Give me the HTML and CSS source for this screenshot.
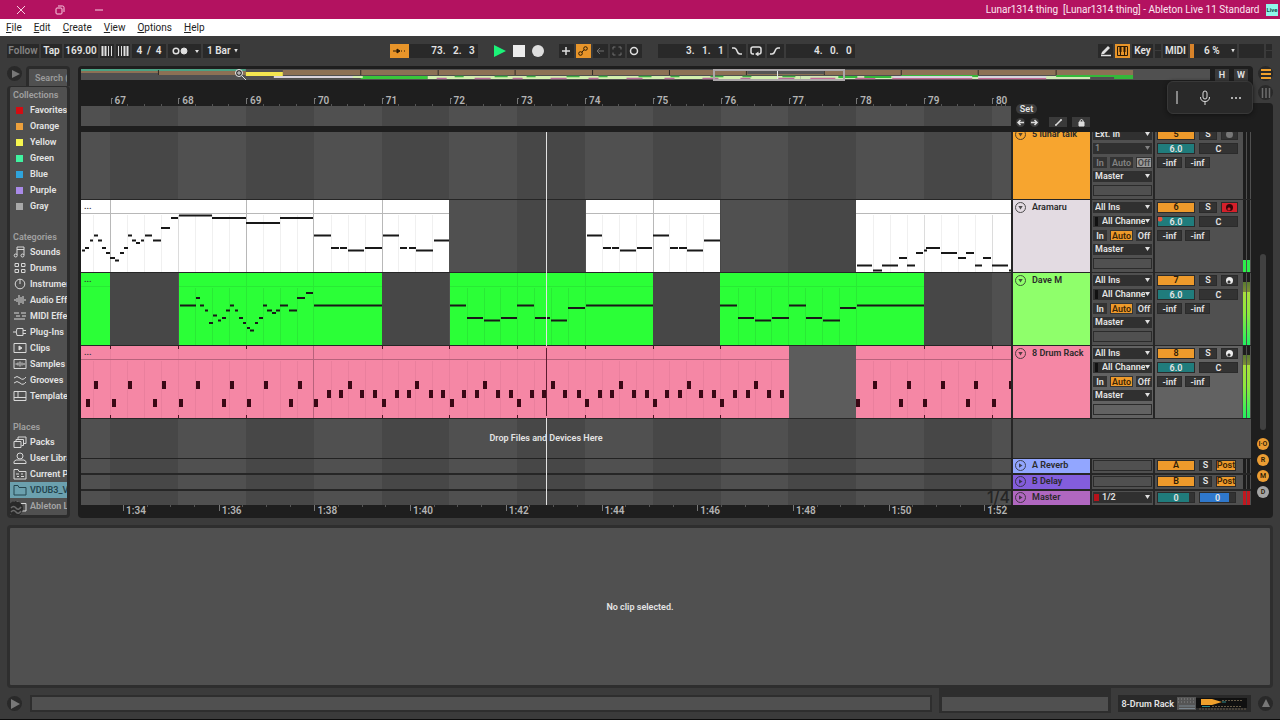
FILE: index.html
```html
<!DOCTYPE html>
<html lang="en">
<head>
    <meta charset="UTF-8">
    <meta name="viewport" content="width=device-width, initial-scale=1.0">
    <title>Lunar1314 thing - Ableton Live 11 Standard</title>
    <link rel="stylesheet" href="styles.css">
</head>
<body>

<header class="titlebar">
    <div class="window-buttons">
        <button aria-label="Close"><svg width="10" height="10" viewBox="0 0 10 10"><path d="M1 1l8 8M9 1l-8 8"/></svg></button>
        <button aria-label="Restore"><svg width="10" height="10" viewBox="0 0 10 10"><rect x="1" y="3" width="6" height="6" rx="1"/><path d="M3 1h4.500a1.500 1.500 0 0 1 1.500 1.500V7"/></svg></button>
        <button aria-label="Minimize"><svg width="10" height="10" viewBox="0 0 10 10"><path d="M1 5h8"/></svg></button>
    </div>
    <div class="window-title">Lunar1314 thing&nbsp; [Lunar1314 thing] - Ableton Live 11 Standard <span class="live-logo">Live</span></div>
</header>

<nav class="menubar">
    <a href="#"><u>F</u>ile</a>
    <a href="#"><u>E</u>dit</a>
    <a href="#"><u>C</u>reate</a>
    <a href="#"><u>V</u>iew</a>
    <a href="#"><u>O</u>ptions</a>
    <a href="#"><u>H</u>elp</a>
</nav>

<div class="toolbar">
    <div class="tool-group">
        <button class="tool follow">Follow</button>
        <button class="tool tap">Tap</button>
        <input class="tool tempo" type="text" value="169.00" aria-label="Tempo">
        <button class="tool nudge" aria-label="Nudge down"><svg width="12" height="10" viewBox="0 0 12 10"><path d="M1.500 0v10M4.500 0v10" stroke-width="2"/><path d="M7.500 0v10M10.500 0v10"/></svg></button>
        <button class="tool nudge" aria-label="Nudge up"><svg width="12" height="10" viewBox="0 0 12 10"><path d="M1.500 0v10M4.500 0v10"/><path d="M7.500 0v10M10.500 0v10" stroke-width="2"/></svg></button>
        <input class="tool signature" type="text" value="4  /  4" aria-label="Time signature">
        <button class="tool metronome" aria-label="Metronome"><svg width="28" height="8" viewBox="0 0 28 8"><circle cx="5" cy="4" r="2.800" stroke-width="1.500"/><circle cx="13" cy="4" r="3" class="fill"/><path class="fill flat" d="M24 3h4l-2 3z"/></svg></button>
        <span class="tool quantize"><select aria-label="Quantization"><option>1 Bar</option></select></span>
    </div>
    <div class="space-left"></div>
    <div class="tool-group">
        <button class="tool on arrow-follow" aria-label="Follow playback"><svg width="14" height="8" viewBox="0 0 14 8"><path d="M1 4h4M9 4h1M12 4h1"/><path class="fill" d="M5 2l3 2-3 2z"/></svg></button>
        <input class="tool position" type="text" value="73.   2.   3" aria-label="Position">
        <div class="transport">
            <button aria-label="Play"><svg width="12" height="14" viewBox="0 0 12 14"><path fill="#1bf278" d="M0 1l12 6-12 6z"/></svg></button>
            <button aria-label="Stop"><svg width="12" height="14" viewBox="0 0 12 14"><path fill="#ececec" d="M0 1h12v12H0z"/></svg></button>
            <button aria-label="Record"><svg width="12" height="14" viewBox="0 0 12 14"><circle fill="#dedede" cx="6" cy="7" r="6"/></svg></button>
        </div>
        <button class="tool square" aria-label="Overdub"><svg width="10" height="10" viewBox="0 0 10 10"><path d="M5 1v8M1 5h8" stroke-width="1.500"/></svg></button>
        <button class="tool square on" aria-label="Automation arm"><svg width="10" height="10" viewBox="0 0 10 10"><circle cx="2.500" cy="7.500" r="1.800"/><circle cx="7.500" cy="2.500" r="1.800"/><path d="M4 6.500q.5-2 2-2.500"/></svg></button>
        <button class="tool square dim" aria-label="Re-enable automation"><svg width="10" height="10" viewBox="0 0 10 10"><path d="M9 5H2M5 2L2 5l3 3"/></svg></button>
        <button class="tool square dim" aria-label="Capture MIDI"><svg width="10" height="10" viewBox="0 0 10 10"><path d="M1 3.500V1h2.500M6.500 1H9v2.500M9 6.500V9H6.500M3.500 9H1V6.500"/></svg></button>
        <button class="tool square" aria-label="Session record"><svg width="10" height="10" viewBox="0 0 10 10"><circle cx="5" cy="5" r="3.500" stroke-width="1.500"/></svg></button>
        <input class="tool position loop-start" type="text" value="3.   1.   1" aria-label="Loop start">
        <button class="tool punch" aria-label="Punch in"><svg width="12" height="10" viewBox="0 0 12 10"><path d="M1 2h2q2 0 3 3t3 3h2" stroke-width="1.500"/></svg></button>
        <button class="tool punch" aria-label="Loop"><svg width="12" height="10" viewBox="0 0 12 10"><path d="M4 8H3Q1 8 1 6V3q0-2 2-2h6q2 0 2 2v3q0 2-2 2H7" stroke-width="1.500"/><path class="fill flat" d="M8.500 5.500v5L5 8z"/></svg></button>
        <button class="tool punch" aria-label="Punch out"><svg width="12" height="10" viewBox="0 0 12 10"><path d="M1 8h2q2 0 3-3t3-3h2" stroke-width="1.500"/></svg></button>
        <input class="tool position" type="text" value="4.   0.   0" aria-label="Loop length">
    </div>
    <div class="space-right"></div>
    <div class="tool-group">
        <button class="tool square" aria-label="Draw mode"><svg width="12" height="12" viewBox="0 0 12 12"><path class="fill flat" d="M2 7l6-6 2 2-6 6-3 .5z"/><path d="M1 10.500h10" stroke-width="1.500"/></svg></button>
        <button class="tool square on" aria-label="Computer MIDI keyboard"><svg width="11" height="10" viewBox="0 0 11 10"><path d="M.5.500h10v9H.5zM3.500 5v5M7.500 5v5"/><path d="M3.500 0v6M7.500 0v6" stroke-width="2"/></svg></button>
        <button class="tool key">Key</button>
        <span class="tool lamp"></span>
        <button class="tool midi">MIDI</button>
        <span class="cpu-bar"></span>
        <span class="tool cpu"><select aria-label="CPU load"><option>6 %</option></select></span>
        <span class="tool disk"></span>
        <span class="tool lamp"></span>
    </div>
</div>

<main class="workspace">
    <aside class="browser">
        <div class="browser-top">
            <button class="round" aria-label="Hide browser"><svg width="14" height="14" viewBox="0 0 14 14"><path fill="#777" d="M4 3l8 4-8 4z"/></svg></button>
            <input class="search" type="text" placeholder="Search (Ctrl + F)" aria-label="Search">
        </div>
        <div class="browser-list">
            <h2>Collections</h2>
            <ul>
                <li><a href="#"><i class="swatch red"></i>Favorites</a></li>
                <li><a href="#"><i class="swatch orange"></i>Orange</a></li>
                <li><a href="#"><i class="swatch yellow"></i>Yellow</a></li>
                <li><a href="#"><i class="swatch green"></i>Green</a></li>
                <li><a href="#"><i class="swatch blue"></i>Blue</a></li>
                <li><a href="#"><i class="swatch purple"></i>Purple</a></li>
                <li><a href="#"><i class="swatch gray"></i>Gray</a></li>
            </ul>
            <h2>Categories</h2>
            <ul>
                <li><a href="#"><svg viewBox="0 0 14 12"><path d="M4 9V1h7v8M4 3.500h7"/><circle cx="2.700" cy="9.500" r="1.500"/><circle cx="9.500" cy="9.500" r="1.500"/></svg>Sounds</a></li>
                <li><a href="#"><svg viewBox="0 0 14 12"><path d="M2 1.500h3.500V4.500H2zM8.500 1.500H12V4.500H8.500zM2 7.500h3.500v3H2zM8.500 7.500H12v3H8.500z"/></svg>Drums</a></li>
                <li><a href="#"><svg viewBox="0 0 14 12"><circle cx="7" cy="6" r="4.800"/><path d="M7 1v5"/></svg>Instruments</a></li>
                <li><a href="#"><svg viewBox="0 0 14 12"><path d="M1 6h2M4 4v4M6 1v10M8 3v6M10 2v8M11 6h2"/></svg>Audio Effects</a></li>
                <li><a href="#"><svg viewBox="0 0 14 12"><path d="M1 3h5M8 3h5M3 6h4M9 6h4M1 9h11"/></svg>MIDI Effects</a></li>
                <li><a href="#"><svg viewBox="0 0 14 12"><path d="M0 6h3M4 2.500h6v7H4q-1.500-3.500 0-7zM10 4.500h3M10 7.500h3"/></svg>Plug-Ins</a></li>
                <li><a href="#"><svg viewBox="0 0 14 12"><path d="M1 1.500h12v9H1z"/><path fill="#ddd" d="M6 4l3 2-3 2z"/></svg>Clips</a></li>
                <li><a href="#"><svg viewBox="0 0 14 12"><path d="M1 1.500h12v9H1zM2.500 6h2M5 4.500v3M7 3.500v5M9 4.500v3M10 6h2"/></svg>Samples</a></li>
                <li><a href="#"><svg viewBox="0 0 14 12"><path d="M1 4q3-3 6 0t6-1M1 9q3-3 6 0t6-1"/></svg>Grooves</a></li>
                <li><a href="#"><svg viewBox="0 0 14 12"><path d="M1 1.500h12v9H1zM5 1.500v6M1 7.500h12"/></svg>Templates</a></li>
            </ul>
            <h2>Places</h2>
            <ul>
                <li><a href="#"><svg viewBox="0 0 14 12"><path d="M1 5.500h7v6H1zM3 5V3.500h7.500v6H8.500M5 3V1h8v6.500h-2"/></svg>Packs</a></li>
                <li><a href="#"><svg viewBox="0 0 14 12"><circle cx="7" cy="4" r="3"/><path d="M1 11.500v-2l2-1.500h8l2 1.500v2z"/></svg>User Library</a></li>
                <li><a href="#"><svg viewBox="0 0 14 12"><path d="M1 11V1.500h4l1 2h7V11zM3 6h3M8 6h2M4 8.500h2M8 8.500h3"/></svg>Current Project</a></li>
                <li class="selected"><a href="#"><svg viewBox="0 0 14 12"><path d="M1 11V1.500h4l1 2h7V11z"/></svg>VDUB3_VSTs</a></li>
                <li class="faded"><a href="#"><svg viewBox="0 0 14 12"><path d="M1 11V1.500h4l1 2h7V11z"/></svg>Ableton Library</a></li>
            </ul>
            <button class="round groove" aria-label="Groove pool"><svg width="14" height="14" viewBox="0 0 14 14"><path fill="none" stroke="#6a6a6a" stroke-width="1.500" d="M2 6q2.500-3 5 0t5-1M2 10q2.500-3 5 0t5-1"/></svg></button>
        </div>
    </aside>

    <section class="arrangement">
        <div class="overview">
            <svg class="overview-map" viewBox="0 0 1130 11" preserveAspectRatio="none">
                <path fill="#505050" d="M0 0h1130v11H0z"/>
                <path fill="#8c7155" d="M0 2h77v2H0zM77 2h88v4H77zM202 1h851v5H202z"/>
                <path fill="#4ba283" d="M0 0h165v2H0z"/>
                <path fill="#f3e650" d="M165 3h37v4h-37z"/>
                <path fill="#d8d3dc" d="M193 7h87v2h-87z"/>
                <path fill="#38c83a" d="M280 7h67v3h-67z"/>
                <path fill="#d3efae" d="M272 7h10v2h-10zM347 7h373v3H347z"/>
                <path fill="#cfe9b5" d="M720 7h290v3H720z"/>
                <path stroke="#b76d98" stroke-width="1.500" stroke-dasharray="10 28 16 22" d="M356 9.500h364"/>
                <path stroke="#3fae43" stroke-width="1.500" stroke-dasharray="9 31 13 19" d="M374 7.500h346"/>
                <path stroke="#c46a97" stroke-width="1.500" d="M730 9.500h25M775 9.500h20M812 9.500h80M898 9.500h68"/>
                <path stroke="#34b83a" stroke-width="2" d="M758 8h19M784 8h27M821 7h77M976 7h77M1034 9h19"/>
                <path stroke="#d5d5dd" stroke-width="2" d="M813 8h79M898 8h68"/>
                <path stroke="#302b27" d="M77.500 1v5M280 1v5M357.500 1v5M434.500 1v5M512 1v5M589 1v5M666 1v5M744 1v5M821 1v5M898 1v5M976 1v5"/>
                <path fill="#555" d="M667 2h77v3h-77z"/>
            </svg>
            <div class="overview-window"></div>
            <svg class="magnifier" width="14" height="14" viewBox="0 0 14 14"><circle cx="6" cy="6" r="3.500" fill="#333" stroke="#eee"/><path d="M9 9l4 4M4 6h4M6 4v4" stroke="#ddd"/></svg>
            <button class="hw">H</button>
            <button class="hw">W</button>
        </div>

        <div class="ruler-row">
            <div class="ruler-area">
                <div class="beat-ruler">
                    <span></span><span>67</span><span>68</span><span>69</span><span>70</span><span>71</span><span>72</span><span>73</span><span>74</span><span>75</span><span>76</span><span>77</span><span>78</span><span>79</span><span>80</span>
                </div>
                <div class="scrub striped"></div>
            </div>
            <div class="set-area">
                <button class="set">Set</button>
                <div class="set-buttons">
                    <button class="dot" aria-label="Previous locator"><svg width="9" height="9" viewBox="0 0 9 9"><path d="M8 4.500H2M4.500 2L2 4.500 4.500 7" stroke-width="1.500"/></svg></button>
                    <button class="dot" aria-label="Next locator"><svg width="9" height="9" viewBox="0 0 9 9"><path d="M1 4.500h6M4.500 2L7 4.500 4.500 7" stroke-width="1.500"/></svg></button>
                    <button class="small-tool" aria-label="Automation mode"><svg width="9" height="9" viewBox="0 0 9 9"><path d="M2 7l5-5M1 7h2M6 2h2" stroke-width="1.500"/></svg></button>
                    <button class="small-tool lock" aria-label="Lock envelopes"><svg width="9" height="9" viewBox="0 0 9 9"><path fill="#ddd" d="M2 4h5v4H2z"/><path d="M3 4V2.500q1.500-2 3 0V4"/></svg></button>
                </div>
            </div>
        </div>

        <div class="tracks">
            <div class="track clipped">
                <div class="lane striped"></div>
                <div class="track-head">
                    <div class="track-name orange"><button class="fold" aria-label="Fold track"></button>5 lunar talk</div>
                    <div class="io">
                        <span class="drop"><select aria-label="Input type"><option>Ext. In</option></select></span>
                        <span class="drop off"><select aria-label="Input channel"><option>1</option></select></span>
                        <div class="monitor off"><button>In</button><button>Auto</button><button class="lit">Off</button></div>
                        <span class="drop"><select aria-label="Output type"><option>Master</option></select></span>
                        <div class="empty-box"></div>
                    </div>
                    <div class="mixer">
                        <div class="mix-row"><button class="number">5</button><button class="solo">S</button><button class="arm" aria-label="Arm"><i></i></button></div>
                        <div class="mix-row"><input class="volume" type="text" value="6.0" aria-label="Volume"><input class="pan" type="text" value="C" aria-label="Pan"></div>
                        <div class="mix-row sends"><input type="text" value="-inf" aria-label="Send A"><input type="text" value="-inf" aria-label="Send B"></div>
                    </div>
                    <div class="meter"><i></i><i></i></div>
                </div>
            </div>

            <div class="track">
                <div class="lane striped">
                    <svg class="clips" viewBox="0 0 930 72" preserveAspectRatio="none">
                        <path fill="#fff" d="M0 0h368v72H0zM505 0h134v72H505zM775 0h155v72H775z"/>
                        <path class="grid light" d="M12.500 15v57M46.500 15v57M63.500 15v57M80.500 15v57M114.500 15v57M131.500 15v57M148.500 15v57M182.500 15v57M199.500 15v57M216.500 15v57M250.500 15v57M267.500 15v57M284.500 15v57M317.500 15v57M334.500 15v57M351.500 15v57M521.500 15v57M538.500 15v57M555.500 15v57M588.500 15v57M605.500 15v57M622.500 15v57M792.500 15v57M809.500 15v57M826.500 15v57M860.500 15v57M877.500 15v57M894.500 15v57"/>
                        <path class="grid strong" d="M0 13.500h368M505 13.500h134M775 13.500h155M29.500 0v72M165.500 0v72M232.500 0v72M301.500 0v72M572.500 0v72"/>
                        <path class="grid" d="M97.500 15v57M843.500 15v57M911.500 15v57"/>
                        <path class="notes" d="M1 50.500h3M4 48h4M9 40.500h3M13 35.500h4M17 40.500h4M21 48h4M25 53h4M29 58h5M34 60.500h4M39 53h4M43 48h4M47 35.500h4M51 40.500h4M55 43h4M60 40.500h3M64 35.500h7M72 40.500h8M80 28h9M90 18h7M98 15.500h33M131 18h34M165 23h34M199 18h33M233 35.500h17M250 48h8M259 48h7M267 50.500h16M284 48h17M302 35.500h16M319 48h7M328 48h7M335 50.500h17M353 40.500h15"/>
                        <path class="notes" d="M506 35.500h15M522 48h8M531 48h7M539 50.500h16M556 48h15M572 35.500h16M589 48h8M598 48h8M606 50.500h16M623 40.500h16M776 65.500h15M792 70.500h9M801 65.500h16M818 58h8M826 65.500h8M835 53h7M843 50.500h3M845 48h14M860 53h16M877 58h8M885 53h8M894 65.500h7M902 58h8M911 65.500h16M928 70.500h2"/>
                    </svg>
                    <span class="clip-label">...</span>
                </div>
                <div class="track-head">
                    <div class="track-name mauve"><button class="fold" aria-label="Fold track"></button>Aramaru</div>
                    <div class="io">
                        <span class="drop"><select aria-label="Input type"><option>All Ins</option></select></span>
                        <span class="drop channel"><select aria-label="Input channel"><option>All Channels</option></select></span>
                        <div class="monitor"><button>In</button><button class="lit">Auto</button><button>Off</button></div>
                        <span class="drop"><select aria-label="Output type"><option>Master</option></select></span>
                        <div class="empty-box"></div>
                    </div>
                    <div class="mixer">
                        <div class="mix-row"><button class="number">6</button><button class="solo">S</button><button class="arm armed" aria-label="Arm"><i></i></button></div>
                        <div class="mix-row"><input class="volume automated" type="text" value="6.0" aria-label="Volume"><input class="pan" type="text" value="C" aria-label="Pan"></div>
                        <div class="mix-row sends"><input type="text" value="-inf" aria-label="Send A"><input type="text" value="-inf" aria-label="Send B"></div>
                    </div>
                    <div class="meter low"><i></i><i></i></div>
                </div>
            </div>

            <div class="track">
                <div class="lane striped">
                    <svg class="clips" viewBox="0 0 930 72" preserveAspectRatio="none">
                        <path fill="#2bff37" d="M0 0h29v72H0zM98 0h203v72H98zM369 0h203v72H369zM639 0h204v72H639z"/>
                        <path class="grid on-green" d="M0 13.500h29M98 13.500h203M369 13.500h203M639 13.500h204M165.500 0v72M232.500 0v72M436.500 0v72M504.500 0v72M707.500 0v72M775.500 0v72M114.500 15v57M131.500 15v57M148.500 15v57M182.500 15v57M199.500 15v57M216.500 15v57M386.500 15v57M403.500 15v57M419.500 15v57M453.500 15v57M470.500 15v57M487.500 15v57M657.500 15v57M674.500 15v57M690.500 15v57M724.500 15v57M741.500 15v57M758.500 15v57"/>
                        <path class="notes" d="M99 32.500h16M115 25h4M119 32.500h4M124 37.500h3M128 50h4M132 42.500h4M137 47.500h3M141 45h4M145 37.500h4M149 32.500h4M154 37.500h3M158 45h4M162 50h3M166 55h3M169 57.500h4M174 50h3M178 45h4M182 32.500h4M186 37.500h5M191 40h4M195 37.500h4M199 32.500h8M208 37.500h8M216 25h8M225 20h7M233 32.500h68"/>
                        <path class="notes" d="M369 32.500h16M386 45h16M403 47.500h16M420 45h16M436 32.500h17M454 45h15M470 47.500h16M487 35h17M505 32.500h67M639 32.500h17M657 45h16M674 47.500h16M691 45h17M708 32.500h17M725 45h16M742 47.500h17M759 35h16M776 32.500h67"/>
                    </svg>
                    <span class="clip-label">...</span>
                </div>
                <div class="track-head">
                    <div class="track-name lime"><button class="fold" aria-label="Fold track"></button>Dave M</div>
                    <div class="io">
                        <span class="drop"><select aria-label="Input type"><option>All Ins</option></select></span>
                        <span class="drop channel"><select aria-label="Input channel"><option>All Channels</option></select></span>
                        <div class="monitor"><button>In</button><button class="lit">Auto</button><button>Off</button></div>
                        <span class="drop"><select aria-label="Output type"><option>Master</option></select></span>
                        <div class="empty-box"></div>
                    </div>
                    <div class="mixer">
                        <div class="mix-row"><button class="number">7</button><button class="solo">S</button><button class="arm midi-arm" aria-label="Arm"><i></i></button></div>
                        <div class="mix-row"><input class="volume" type="text" value="6.0" aria-label="Volume"><input class="pan" type="text" value="C" aria-label="Pan"></div>
                        <div class="mix-row sends"><input type="text" value="-inf" aria-label="Send A"><input type="text" value="-inf" aria-label="Send B"></div>
                    </div>
                    <div class="meter high"><i></i><i></i></div>
                </div>
            </div>

            <div class="track active">
                <div class="lane over-playhead">
                    <svg class="clips" viewBox="0 0 930 72" preserveAspectRatio="none">
                        <path fill="#5c5c5c" d="M0 0h930v72H0z"/>
                        <path fill="#f587a5" d="M0 0h708v72H0zM775 0h155v72H775z"/>
                        <path class="grid on-pink" d="M12.500 15v57M46.500 15v57M63.500 15v57M80.500 15v57M114.500 15v57M131.500 15v57M148.500 15v57M182.500 15v57M199.500 15v57M216.500 15v57M250.500 15v57M267.500 15v57M284.500 15v57M317.500 15v57M334.500 15v57M351.500 15v57M386.500 15v57M403.500 15v57M419.500 15v57M453.500 15v57M487.500 15v57M521.500 15v57M538.500 15v57M555.500 15v57M588.500 15v57M605.500 15v57M622.500 15v57M657.500 15v57M674.500 15v57M690.500 15v57M792.500 15v57M809.500 15v57M826.500 15v57M860.500 15v57M877.500 15v57M894.500 15v57"/>
                        <path class="grid on-pink" d="M29.500 0v72M97.500 0v72M165.500 0v72M301.500 0v72M368.500 0v72M436.500 0v72M504.500 0v72M572.500 0v72M639.500 0v72M843.500 0v72M911.500 0v72"/>
                        <path class="grid on-pink-strong" d="M0 13.500h708M775 13.500h155M232.500 0v72"/>
                        <path stroke="#501525" d="M29.500 0v3m0 66v3M97.500 0v3m0 66v3M165.500 0v3m0 66v3M301.500 0v3m0 66v3M368.500 0v3m0 66v3M436.500 0v3m0 66v3M504.500 0v3m0 66v3M572.500 0v3m0 66v3M639.500 0v3m0 66v3M843.500 0v3m0 66v3M911.500 0v3m0 66v3"/>
                        <path class="hits" d="M15 35v8M49 35v8M83 35v8M117 35v8M151 35v8M185 35v8M219 35v8M269 35v8M336 35v8M404 35v8M472 35v8M540 35v8M608 35v8M675 35v8M794 35v8M828 35v8M862 35v8M895 35v8M930 35v8"/>
                        <path class="hits" d="M248 44v8M260 44v8M281 44v8M294 44v8M316 44v8M328 44v8M350 44v8M362 44v8M383 44v8M396 44v8M417 44v8M430 44v8M451 44v8M463 44v8M484 44v8M498 44v8M519 44v8M531 44v8M553 44v8M566 44v8M586 44v8M599 44v8M620 44v8M633 44v8M654 44v8M667 44v8M688 44v8M701 44v8"/>
                        <path class="hits" d="M7 53v8M33 53v8M74 53v8M100 53v8M143 53v8M168 53v8M210 53v8M235 53v8M303 53v8M371 53v8M438 53v8M506 53v8M574 53v8M641 53v8M777 53v8M820 53v8M844 53v8M887 53v8M913 53v8"/>
                        <path stroke="#5c1c30" d="M465.500 2v68"/>
                    </svg>
                    <span class="clip-label">...</span>
                </div>
                <div class="track-head">
                    <div class="track-name pink"><button class="fold" aria-label="Fold track"></button>8 Drum Rack</div>
                    <div class="io">
                        <span class="drop"><select aria-label="Input type"><option>All Ins</option></select></span>
                        <span class="drop channel"><select aria-label="Input channel"><option>All Channels</option></select></span>
                        <div class="monitor"><button>In</button><button class="lit">Auto</button><button>Off</button></div>
                        <span class="drop"><select aria-label="Output type"><option>Master</option></select></span>
                        <div class="empty-box"></div>
                    </div>
                    <div class="mixer">
                        <div class="mix-row"><button class="number">8</button><button class="solo">S</button><button class="arm midi-arm" aria-label="Arm"><i></i></button></div>
                        <div class="mix-row"><input class="volume" type="text" value="6.0" aria-label="Volume"><input class="pan" type="text" value="C" aria-label="Pan"></div>
                        <div class="mix-row sends"><input type="text" value="-inf" aria-label="Send A"><input type="text" value="-inf" aria-label="Send B"></div>
                    </div>
                    <div class="meter high"><i></i><i></i></div>
                </div>
            </div>

            <div class="drop-area">
                <div class="lane striped">Drop Files and Devices Here</div>
                <div class="drop-head"></div>
            </div>

            <div class="track return">
                <div class="lane striped"></div>
                <div class="track-head">
                    <div class="track-name periwinkle"><button class="fold closed" aria-label="Unfold track"></button>A Reverb</div>
                    <div class="io"><div class="empty-box"></div></div>
                    <div class="mixer"><div class="mix-row"><button class="number">A</button><button class="solo narrow">S</button><button class="post">Post</button></div></div>
                    <div class="meter"><i></i><i></i></div>
                </div>
            </div>
            <div class="track return">
                <div class="lane striped"></div>
                <div class="track-head">
                    <div class="track-name violet"><button class="fold closed" aria-label="Unfold track"></button>B Delay</div>
                    <div class="io"><div class="empty-box"></div></div>
                    <div class="mixer"><div class="mix-row"><button class="number">B</button><button class="solo narrow">S</button><button class="post">Post</button></div></div>
                    <div class="meter"><i></i><i></i></div>
                </div>
            </div>
            <div class="track return master">
                <div class="lane striped"></div>
                <div class="track-head">
                    <div class="track-name orchid"><button class="fold closed" aria-label="Unfold track"></button>Master</div>
                    <div class="io"><span class="drop channel cue"><select aria-label="Master output"><option>1/2</option></select></span></div>
                    <div class="mixer"><div class="mix-row"><input class="volume" type="text" value="0" aria-label="Master volume"><input class="pan cue-volume" type="text" value="0" aria-label="Cue volume"></div></div>
                    <div class="meter clip"><i></i><i></i></div>
                </div>
            </div>
            <div class="playhead"></div>
            <div class="grid-size">1/4</div>
        </div>

        <div class="time-ruler">
            <span></span><span>1:34</span><span>1:36</span><span>1:38</span><span>1:40</span><span>1:42</span><span>1:44</span><span>1:46</span><span>1:48</span><span>1:50</span><span>1:52</span>
        </div>

        <div class="dictation">
            <span class="grip"></span>
            <button aria-label="Microphone"><svg width="12" height="16" viewBox="0 0 12 16"><rect x="4" y="1" width="4" height="8" rx="2"/><path d="M1.500 7q0 4.500 4.500 4.500T10.500 7M6 11.500V15"/></svg></button>
            <button aria-label="More"><svg width="12" height="16" viewBox="0 0 12 16"><g fill="#ddd" stroke="none"><circle cx="2" cy="8" r="1"/><circle cx="6" cy="8" r="1"/><circle cx="10" cy="8" r="1"/></g></svg></button>
        </div>
    </section>

    <div class="rail">
        <div class="view-switch">
            <button class="round" aria-label="Arrangement view"><svg width="14" height="14" viewBox="0 0 14 14"><path stroke="#f0a02c" stroke-width="2" d="M2 3h10M2 7h10M2 11h10"/></svg></button>
            <button class="round" aria-label="Session view"><svg width="14" height="14" viewBox="0 0 14 14"><path stroke="#6c6c6c" stroke-width="1.500" d="M3.500 2v10M7 2v10M10.500 2v10"/></svg></button>
        </div>
        <div class="rail-body">
            <div class="scroll-thumb"></div>
            <button class="section-toggle">I·O</button>
            <button class="section-toggle">R</button>
            <button class="section-toggle">M</button>
            <button class="section-toggle inactive">D</button>
        </div>
    </div>
</main>

<section class="detail">No clip selected.</section>

<footer class="statusbar">
    <button class="round" aria-label="Info view"><svg width="14" height="14" viewBox="0 0 14 14"><path fill="#777" d="M3 2l9 5-9 5z"/></svg></button>
    <div class="status-text"></div>
    <div class="clip-tab"><div></div></div>
    <button class="device-tab">8-Drum Rack
        <svg width="70" height="13" viewBox="0 0 70 13">
            <path fill="#555" d="M0 0h19v13H0z"/>
            <path stroke="#888" stroke-dasharray="1 2" d="M1 2h17M1 5h17"/>
            <path stroke="#7b8790" d="M2 9h16M2 11.500h16"/>
            <path fill="#101010" d="M19 1h51v10H19z"/>
            <path fill="#f0a02c" d="M24 2h11l10 3-10 3H24z"/>
            <path stroke="#2f8b8b" d="M25 9.500h8M45 5h4"/>
            <path stroke="#665b48" stroke-dasharray="2 1" d="M22 12h48M35 9.500h30M45 3.500h20"/>
        </svg>
    </button>
    <button class="round" aria-label="Show detail"><svg width="14" height="14" viewBox="0 0 14 14"><path fill="#777" d="M7 2l4 8H3z"/></svg></button>
</footer>

</body>
</html>
```

FILE: styles.css
```css
* {
    box-sizing: border-box;
}

body {
    margin: 0;
    min-height: 100vh;
    display: flex;
    flex-direction: column;
    background-color: #3b3b3b;
    border-bottom: 1px solid #0c0c0c;
    color: #e4e4e4;
    font-family: Roboto, sans-serif;
    font-size: 9px;
    font-weight: 600;
}

button, input, select {
    margin: 0;
    padding: 0;
    border: none;
    border-radius: 0;
    background: none;
    color: inherit;
    font: inherit;
    min-width: 0;
}

button {
    display: flex;
    align-items: center;
    justify-content: center;
}

select {
    appearance: none;
    width: 100%;
    display: block;
}

a {
    color: inherit;
    text-decoration: none;
}

svg {
    display: block;
    flex: none;
}

/* window frame */
.titlebar {
    height: 19px;
    display: flex;
    align-items: center;
    justify-content: space-between;
    padding: 0 2px 0 16px;
    background-color: #b31260;
    color: #fbe6f0;
    font-size: 10px;
    font-weight: 400;
}

.window-buttons {
    display: flex;
    gap: 29px;
}

.window-buttons svg {
    fill: none;
    stroke: #f8cfe2;
}

.window-title {
    display: flex;
    align-items: center;
    gap: 4px;
    white-space: pre;
}

.live-logo {
    width: 12px;
    height: 12px;
    background-color: #8ff5ea;
    color: #14504b;
    font-size: 6px;
    font-weight: 700;
    line-height: 12px;
    text-align: center;
}

.menubar {
    height: 17px;
    display: flex;
    align-items: center;
    gap: 12px;
    padding-left: 6px;
    background-color: #fff;
    color: #222;
    font-size: 10px;
    font-weight: 400;
}

/* control bar */
.toolbar {
    height: 29px;
    display: flex;
    align-items: center;
    padding: 0 8px 0 7px;
}

.tool-group {
    display: flex;
    align-items: center;
    gap: 2px;
}

.space-left {
    flex: 8;
}

.space-right {
    flex: 13;
}

.tool {
    height: 14px;
    background-color: #292929;
    text-align: center;
}

.tool svg {
    fill: none;
    stroke: #e0e0e0;
    margin: auto;
}

.tool .fill {
    fill: #e0e0e0;
}

.tool .flat {
    stroke: none;
}

.tool.on {
    background-color: #e8952a;
}

.tool.on svg {
    stroke: #2b1a05;
}

.tool.on .fill {
    fill: #2b1a05;
}

.tool.dim svg {
    stroke: #707070;
}

.follow {
    width: 32px;
    color: #838383;
}

.tap {
    width: 21px;
}

.tempo {
    width: 34px;
}

.nudge {
    width: 14px;
}

.signature {
    width: 34px;
}

.metronome {
    width: 33px;
}

.quantize, .cpu, .drop {
    position: relative;
    display: block;
}

.quantize {
    width: 37px;
    padding-left: 4px;
}

.quantize select, .cpu select {
    height: 14px;
}

.quantize::after, .cpu::after, .drop::after {
    content: "";
    position: absolute;
    right: 2px;
    top: 3px;
    width: 5px;
    height: 4px;
    background-color: #e0e0e0;
    clip-path: polygon(0 0, 100% 0, 50% 100%);
    pointer-events: none;
}

.quantize::after, .cpu::after {
    top: 5px;
    width: 4px;
}

.follow, .tap, .tempo, .signature, .quantize, .key, .midi, .cpu {
    font-size: 10px;
}

.arrow-follow {
    width: 19px;
    margin-right: -2px;
}

.position {
    width: 69px;
    padding-right: 3px;
    text-align: right;
    white-space: pre;
    font-size: 10px;
}

.transport {
    display: flex;
    gap: 7px;
    padding: 0 13px 0 14px;
}

.square {
    width: 15px;
}

.loop-start {
    margin-left: 14px;
}

.punch {
    width: 17px;
}

.key {
    width: 21px;
}

.lamp {
    width: 6px;
    background: linear-gradient(#292929 6px, #3b3b3b 6px, #3b3b3b 7px, #292929 7px);
}

.midi {
    width: 25px;
}

.cpu-bar {
    width: 4px;
    height: 14px;
    margin-right: -2px;
    background-color: #d8832a;
}

.cpu {
    width: 43px;
    padding-left: 10px;
}

.disk {
    width: 25px;
}

.round {
    width: 15px;
    height: 15px;
    flex: none;
    border-radius: 50%;
    background-color: #292929;
}

/* main area */
.workspace {
    display: flex;
    padding: 1px 7px 0 7px;
}

.browser {
    width: 63px;
    flex: none;
    margin-right: 8px;
    display: flex;
    flex-direction: column;
    overflow: hidden;
}

.browser-top {
    display: flex;
    gap: 4px;
}

.search {
    flex: 1;
    height: 20px;
    padding: 0 0 0 6px;
    border: 3px solid #2b2b2b;
    border-bottom: none;
    border-radius: 4px 4px 0 0;
    background-color: #505050;
}

.search::placeholder {
    color: #9b9b9b;
}

.browser-list {
    position: relative;
    flex: 1;
    border: 3px solid #2b2b2b;
    border-top-width: 1px;
    border-radius: 4px;
    background-color: #505050;
    overflow: hidden;
    white-space: nowrap;
}

.browser h2 {
    margin: 15px 0 0;
    padding-left: 3px;
    height: 15px;
    color: #a0a0a0;
    font-size: 9px;
    font-weight: 600;
    line-height: 16px;
}

.browser h2:first-child {
    margin-top: 0;
}

.browser ul {
    margin: 0;
    padding: 0;
    list-style: none;
}

.browser li a {
    display: flex;
    align-items: center;
    height: 16px;
    padding-left: 3px;
    gap: 3px;
}

.browser li svg {
    width: 14px;
    height: 12px;
    fill: none;
    stroke: #d8d8d8;
}

.swatch {
    flex: none;
    width: 7px;
    height: 7px;
    margin: 0 4px 0 3px;
}

.swatch.red {
    background-color: #d30c12;
}

.swatch.orange {
    background-color: #eda03c;
}

.swatch.yellow {
    background-color: #f5f54f;
}

.swatch.green {
    background-color: #40f2a0;
}

.swatch.blue {
    background-color: #2fa4dc;
}

.swatch.purple {
    background-color: #a98ae8;
}

.swatch.gray {
    background-color: #a8a8a8;
}

.browser .selected {
    background-color: #6ba0ae;
    color: #24454f;
}

.browser .selected svg {
    stroke: #24454f;
}

.browser .faded {
    color: #a5a5a5;
}

.groove {
    position: absolute;
    left: -2px;
    bottom: -1px;
}

.arrangement {
    position: relative;
    flex: 1;
    min-width: 0;
    padding: 3px 2px 0 3px;
    border-radius: 4px 4px 0 4px;
    background-color: #1e1e1e;
}

.overview {
    position: relative;
    display: flex;
    gap: 5px;
    height: 12px;
    padding-right: 3px;
}

.overview-map {
    flex: 1;
    min-width: 0;
    height: 11px;
}

.overview-window {
    position: absolute;
    left: 54%;
    top: 0;
    width: 11.3%;
    height: 12px;
    border: 2px solid #aba7a9;
    background: linear-gradient(#e8e8e8, #e8e8e8) 49% 0 / 1px 100% no-repeat;
}

.magnifier {
    position: absolute;
    left: 13%;
    top: -2px;
}

.hw {
    width: 14px;
    height: 12px;
    background-color: #3a3a3a;
}

.ruler-row {
    display: flex;
    height: 51px;
}

.ruler-area {
    flex: 1;
    min-width: 0;
}

.beat-ruler {
    display: grid;
    grid-template-columns: minmax(0, 295fr) repeat(13, minmax(0, 678fr)) minmax(0, 191fr);
    height: 25px;
    align-items: end;
    color: #b4b4b4;
    font-size: 10px;
}

.beat-ruler span {
    height: 8px;
    padding-left: 4px;
    line-height: 5px;
    background: linear-gradient(#777, #777) 0 0 / 1px 6px no-repeat,
        linear-gradient(#777, #777) 0 0 / 2px 1px no-repeat,
        linear-gradient(#555, #555) 25% 6px / 1px 2px no-repeat,
        linear-gradient(#555, #555) 50% 6px / 1px 2px no-repeat,
        linear-gradient(#555, #555) 75% 6px / 1px 2px no-repeat;
}

.beat-ruler span:first-child, .time-ruler span:first-child {
    background: none;
}

.scrub {
    height: 20px;
}

/* one light and one dark bar per period */
.striped {
    background-image: repeating-linear-gradient(90deg, #505050 0, #505050 3.17%, #474747 3.17%, #474747 10.46%, #505050 10.46%, #505050 14.58%);
}

.set-area {
    width: 240px;
    padding: 23px 0 0 5px;
}

.set {
    width: 21px;
    height: 10px;
    border-radius: 5px;
    background-color: #3c3c3c;
}

.set-buttons {
    display: flex;
    align-items: center;
    gap: 5px;
    margin-top: 3px;
}

.set-buttons svg {
    fill: none;
    stroke: #ddd;
}

.dot {
    width: 9px;
    height: 9px;
    border-radius: 50%;
    background-color: #3c3c3c;
}

.small-tool {
    width: 18px;
    height: 10px;
    margin-left: 5px;
    background-color: #3a3a3a;
}

.lock {
    margin-left: 0;
}

.tracks {
    position: relative;
}

.track {
    display: flex;
    align-items: flex-end;
    height: 73px;
    border-bottom: 1px solid #262626;
    overflow: hidden;
}

.track.clipped {
    height: 68px;
}

.lane {
    position: relative;
    flex: 1;
    min-width: 0;
    height: 72px;
}

.over-playhead {
    z-index: 2;
}

.clips {
    width: 100%;
    height: 72px;
}

.clip-label {
    position: absolute;
    left: 3px;
    top: 1px;
    color: #333;
    line-height: 10px;
}

.notes {
    stroke: #181818;
    stroke-width: 2;
}

.hits {
    stroke: #3a0815;
    stroke-width: 4;
}

.grid {
    fill: none;
    stroke: #dcdcdc;
}

.grid.light {
    stroke: #f0f0f0;
}

.grid.strong {
    stroke: #b8b8b8;
}

.grid.on-green {
    stroke: #29ea35;
}

.grid.on-pink {
    stroke: #ea7f9d;
}

.grid.on-pink-strong {
    stroke: #b9627c;
}

.track-head {
    display: grid;
    grid-template-columns: 77px 61px 87px 9px;
    column-gap: 2px;
    width: 240px;
    height: 72px;
    padding-left: 2px;
    background-color: #262626;
}

.track-head > .meter {
    margin-left: -2px;
}

.track-name {
    display: flex;
    align-items: flex-start;
    gap: 6px;
    padding: 2px 0 0 2px;
    color: #2a2a2a;
    line-height: 11px;
    white-space: nowrap;
}

.track-name.orange {
    background-color: #f7a52f;
}

.track-name.mauve {
    background-color: #e3dbe2;
}

.track-name.lime {
    background-color: #8fff6b;
}

.track-name.pink {
    background-color: #f587a5;
}

.track-name.periwinkle {
    background-color: #92a6ff;
}

.track-name.violet {
    background-color: #835ddc;
}

.track-name.orchid {
    background-color: #b067c0;
}

.fold {
    width: 11px;
    height: 11px;
    border: 1px solid currentColor;
    border-radius: 50%;
    opacity: 0.8;
}

.fold::after {
    content: "";
    width: 5px;
    height: 4px;
    background-color: currentColor;
    clip-path: polygon(0 0, 100% 0, 50% 100%);
}

.fold.closed::after {
    width: 4px;
    height: 5px;
    clip-path: polygon(0 0, 100% 50%, 0 100%);
}

.io {
    display: flex;
    flex-direction: column;
    gap: 3px;
    padding: 2px 1px;
    background-color: #505050;
}

.drop {
    height: 11px;
    padding-left: 2px;
    background-color: #303030;
}

.drop select {
    height: 11px;
    line-height: 11px;
}

.drop.channel select {
    width: 50px;
    padding-left: 7px;
}

.drop.channel {
    background-image: linear-gradient(#111, #111);
    background-size: 3px 9px;
    background-repeat: no-repeat;
    background-position: 2px 1px;
}

.drop.cue {
    background-image: linear-gradient(#b5121b, #b5121b);
    background-size: 5px 7px;
    background-position: 1px 2px;
}

.drop.off {
    color: #838383;
}

.drop.off::after {
    background-color: #838383;
}

.monitor {
    display: grid;
    grid-template-columns: 14px 23px 16px;
    justify-content: space-between;
    height: 11px;
}

.monitor button {
    background-color: #333;
}

.monitor .lit {
    background-color: #ee9a2b;
    outline: 1px solid #333;
    outline-offset: -1px;
    color: #3c2305;
}

.monitor.off {
    color: #838383;
}

.monitor.off .lit {
    background-color: #9b9b9b;
    color: #444;
}

.empty-box {
    height: 11px;
    border: 1px solid #2b2b2b;
}

.mixer {
    display: flex;
    flex-direction: column;
    gap: 3px;
    padding: 2px;
    background-color: #505050;
}

.active .mixer, .active .io {
    background-color: #626262;
}

.mix-row {
    display: grid;
    grid-template-columns: 38px 18px 17px;
    justify-content: start;
    column-gap: 4px;
    height: 11px;
}

.mix-row > * {
    height: 11px;
    border: 1px solid #2b2b2b;
    background-color: #333;
    line-height: 9px;
    text-align: center;
}

.mix-row .number {
    background-color: #ee9a2b;
    color: #2e1d08;
}

.mix-row .volume {
    background-color: #207c7c;
}

.mix-row .automated {
    background-image: radial-gradient(circle at 2px 2px, #e5543f 2px, transparent 3px);
}

.pan {
    grid-column: 2 / 4;
}

.mix-row .cue-volume {
    background: linear-gradient(90deg, #2f78cc 84%, #333 84%);
}

.master .volume {
    background: linear-gradient(90deg, #207c7c 86%, #333 86%);
}

.sends {
    grid-template-columns: 25px 25px;
    column-gap: 3px;
}

.arm i {
    width: 7px;
    height: 7px;
    border-radius: 50%;
    background-color: #777;
}

.midi-arm i {
    background: radial-gradient(circle at 3px 5px, #333 1px, transparent 2px), #eee;
}

.mix-row .armed {
    background-color: #d5202a;
}

.armed i {
    background: radial-gradient(circle at 3px 5px, #d5202a 1px, transparent 2px), #34060a;
}

.return .mix-row {
    grid-template-columns: 38px 13px 20px;
}

.mix-row .post {
    background-color: #ee9a2b;
    color: #3c2305;
}

.meter {
    display: flex;
    gap: 1px;
    padding: 0 3px 0 1px;
    background-color: #505050;
}

.meter i {
    flex: 1;
    background-color: #1d1d1d;
}

.meter.low i {
    background: linear-gradient(#1d1d1d 60px, #2cf04b 60px);
}

.meter.high i {
    background: linear-gradient(#1d1d1d 9px, #5a7a30 9px, #7c8f35 19px, #a8e03c 19px, #8ee93d 40px, #22f060);
}

.meter.clip i {
    background-color: #c11820;
}

.drop-area {
    display: flex;
    height: 40px;
    border-bottom: 1px solid #222;
}

.drop-area .lane {
    height: 39px;
    line-height: 39px;
    text-align: center;
}

.drop-head {
    width: 240px;
    border-left: 2px solid #262626;
    background-color: #505050;
}

.track.return {
    height: 16px;
    border-bottom-width: 2px;
}

.track.return.master {
    height: 14px;
    border-bottom: none;
}

.return .lane, .return .track-head {
    height: 14px;
}

.return .track-name, .return .mixer, .return .io {
    padding-top: 1px;
}

.playhead {
    position: absolute;
    z-index: 1;
    left: calc((100% - 240px) / 2);
    top: 0;
    bottom: 0;
    width: 1px;
    background-color: #e2e2e2;
}

.grid-size {
    position: absolute;
    right: 241px;
    bottom: 0;
    color: #252525;
    font-family: Inter, sans-serif;
    font-size: 16px;
    font-weight: 500;
    line-height: 16px;
}

.time-ruler {
    display: grid;
    grid-template-columns: minmax(0, 420fr) repeat(9, minmax(0, 957fr)) minmax(0, 267fr);
    height: 13px;
    margin-right: 240px;
    color: #b4b4b4;
    font-size: 10px;
    line-height: 12px;
}

.time-ruler span {
    padding-left: 3px;
    background: linear-gradient(#777, #777) 0 0 / 1px 6px no-repeat,
        linear-gradient(#555, #555) 25% 0 / 1px 2px no-repeat,
        linear-gradient(#555, #555) 50% 0 / 1px 2px no-repeat,
        linear-gradient(#555, #555) 75% 0 / 1px 2px no-repeat;
}

.dictation {
    position: absolute;
    z-index: 3;
    top: 15px;
    right: 0;
    width: 86px;
    height: 33px;
    display: flex;
    align-items: center;
    border: 1px solid #383838;
    border-radius: 6px;
    background-color: #292929;
    box-shadow: 0 1px 4px #111;
}

.dictation .grip {
    flex: none;
    width: 2px;
    height: 13px;
    margin: 0 21px 0 8px;
    background-color: #888;
}

.dictation button {
    flex: none;
    margin-right: 19px;
}

.dictation svg {
    fill: none;
    stroke: #ddd;
}

.rail {
    display: flex;
    flex-direction: column;
    width: 20px;
}

.view-switch {
    display: flex;
    flex-direction: column;
    gap: 4px;
    height: 37px;
    padding-left: 5px;
}

.rail-body {
    flex: 1;
    display: flex;
    flex-direction: column;
    align-items: center;
    gap: 4px;
    padding-bottom: 20px;
    border-radius: 0 4px 4px 0;
    background-color: #1e1e1e;
}

.scroll-thumb {
    width: 6px;
    height: 176px;
    margin: auto 0 4px;
    border-radius: 3px;
    background-color: #414141;
}

.section-toggle {
    width: 12px;
    height: 12px;
    border-radius: 50%;
    background-color: #ec9d33;
    color: #2e1d08;
    font-size: 7px;
}

.section-toggle.inactive {
    background-color: #a5a5a5;
}

/* bottom area */
.detail {
    flex: 1;
    display: flex;
    align-items: center;
    justify-content: center;
    margin: 7px 7px 0;
    border: 3px solid #2e2e2e;
    border-radius: 4px;
    background-color: #505050;
}

.statusbar {
    height: 31px;
    display: flex;
    align-items: center;
    padding: 0 7px;
}

.status-text {
    flex: 1;
    height: 17px;
    margin: 0 7px 0 8px;
    border: 2px solid #2e2e2e;
    background-color: #505050;
}

.clip-tab {
    width: 172px;
    height: 25px;
    align-self: flex-start;
    padding: 9px 3px 2px;
    background-color: #2e2e2e;
}

.clip-tab div {
    height: 14px;
    background-color: #505050;
}

.device-tab {
    gap: 3px;
    height: 17px;
    margin: 0 7px;
    padding: 0 4px 0 3px;
    background-color: #292929;
    white-space: nowrap;
}
```
